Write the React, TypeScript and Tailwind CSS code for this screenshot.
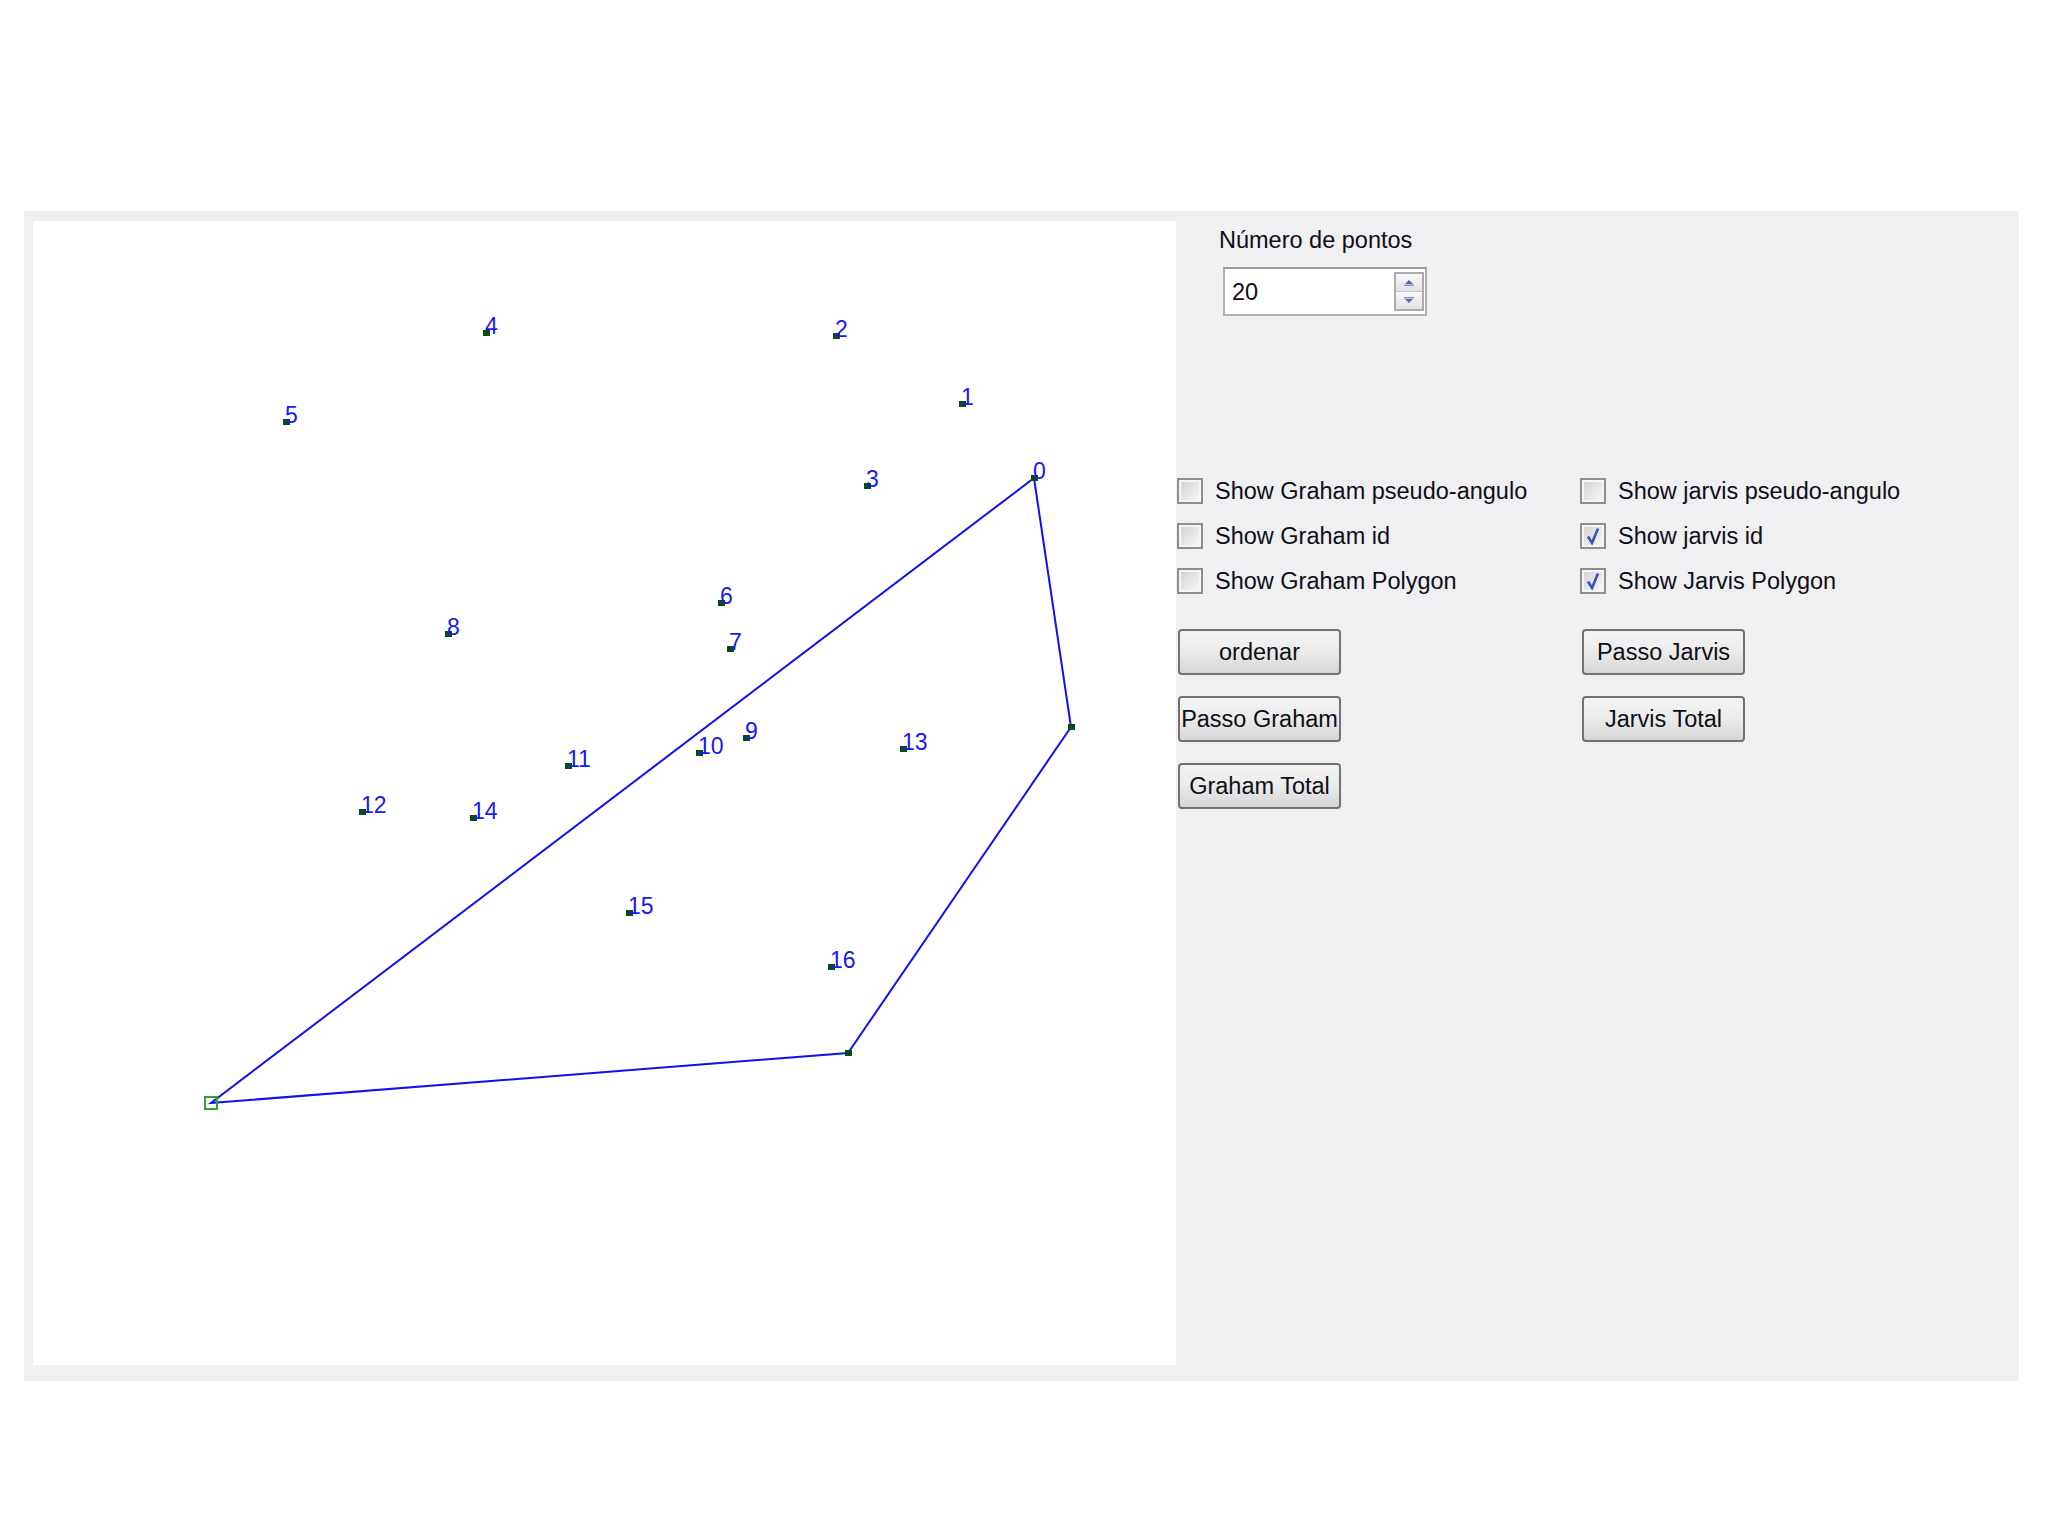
import React from 'react';

type Pt = { x: number; y: number; id?: number };

// page coordinates of the points (marker centre)
const points: Pt[] = [
    { x: 1034, y: 478, id: 0 },
    { x: 962, y: 404, id: 1 },
    { x: 836, y: 336, id: 2 },
    { x: 867, y: 486, id: 3 },
    { x: 486, y: 333, id: 4 },
    { x: 286, y: 422, id: 5 },
    { x: 721, y: 603, id: 6 },
    { x: 730, y: 649, id: 7 },
    { x: 448, y: 634, id: 8 },
    { x: 746, y: 738, id: 9 },
    { x: 699, y: 753, id: 10 },
    { x: 568, y: 766, id: 11 },
    { x: 362, y: 812, id: 12 },
    { x: 903, y: 749, id: 13 },
    { x: 473, y: 818, id: 14 },
    { x: 629, y: 913, id: 15 },
    { x: 831, y: 967, id: 16 },
    { x: 1071, y: 727 },
    { x: 848, y: 1053 },
];

const start = { x: 211, y: 1103 };

const hull = [points[0], points[17], points[18], start];

const Canvas: React.FC = () => {
    const d = hull.map((p, i) => `${i === 0 ? 'M' : 'L'}${p.x} ${p.y}`).join(' ') + ' Z';
    return (
        <svg width="1143" height="1144" viewBox="33 221 1143 1144" className="block">
            <path d={d} fill="none" stroke="#1010f0" strokeWidth={2} />
            {points.map((p, i) => (
                <g key={i}>
                    <rect x={p.x - 3} y={p.y - 3} width={7} height={6} fill="#0b4a12" />
                    {p.id !== undefined && (
                        <text
                            x={p.x - 1}
                            y={p.y + 1}
                            fontFamily="'Liberation Sans', Arial, sans-serif"
                            fontSize={23}
                            fill="#1818f0"
                        >
                            {p.id}
                        </text>
                    )}
                </g>
            ))}
            <rect x={205} y={1097} width={12} height={12} fill="none" stroke="#2ea32e" strokeWidth={2} />
        </svg>
    );
};

const CheckBox: React.FC<{ label: string; checked?: boolean }> = ({ label, checked }) => (
    <div className="flex h-[45px] items-center">
        <span className="flex h-[26px] w-[26px] border-2 border-[#8e8e8e]">
            <span className="flex flex-1 items-center justify-center border-2 border-[#f5f5f5] bg-linear-to-br from-[#d4d4d4] to-[#f6f6f6]">
                {checked && (
                    <svg width="16" height="18" viewBox="0 0 16 18">
                        <path d="M3 9.5 L7 16 L13 1.5" fill="none" stroke="#3556b4" strokeWidth={2.6} />
                    </svg>
                )}
            </span>
        </span>
        <span className="ml-[12px] text-[23.5px] leading-[28px] whitespace-nowrap text-[#0e0e18]">{label}</span>
    </div>
);

const Button: React.FC<{ label: string }> = ({ label }) => (
    <div className="flex h-[46px] w-[163px] items-center justify-center overflow-hidden rounded-[4px] border-2 border-[#727272] bg-linear-to-b from-[#f4f4f4] via-[#ebebeb] to-[#d6d6d6]">
        <span className="text-[23.5px] leading-[28px] whitespace-nowrap text-[#0e0e18]">{label}</span>
    </div>
);

const SpinBox: React.FC = () => (
    <div className="ml-[47px] mt-[13px] flex h-[49px] w-[204px] items-center border-2 border-[#b0b0b0] border-t-[#9c9c9c] bg-white">
        <span className="flex-1 pl-[7px] text-[23.5px] leading-[28px] text-[#0e0e18]">20</span>
        <div className="mr-[1px] flex h-[39px] w-[30px] flex-col border-2 border-[#ababab] bg-[#ececec]">
            <div className="flex flex-1 items-center justify-center border-b border-[#c4c4c4] bg-linear-to-b from-[#f8f8f8] to-[#e2e2e2]">
                <svg width="10" height="7" viewBox="0 0 10 7">
                    <path d="M1 5 L5 1 L9 5 Z" fill="#5468ac" />
                    <rect x="0" y="5.5" width="10" height="1.5" fill="#8b98c6" />
                </svg>
            </div>
            <div className="flex flex-1 items-center justify-center bg-linear-to-b from-[#f8f8f8] to-[#e2e2e2]">
                <svg width="10" height="7" viewBox="0 0 10 7">
                    <rect x="0" y="0" width="10" height="1.5" fill="#8b98c6" />
                    <path d="M1 2 L5 6 L9 2 Z" fill="#5468ac" />
                </svg>
            </div>
        </div>
    </div>
);

export default function App() {
    return (
        <div className="h-[1536px] w-[2048px] bg-white pl-[24px] pt-[211px] font-['Liberation_Sans',Arial,sans-serif]">
            <div className="flex h-[1170px] w-[1995px] items-start bg-[#f0eff1]">
                {/* drawing area */}
                <div className="ml-[9px] mt-[10px] h-[1144px] w-[1143px] bg-white">
                    <Canvas />
                </div>

                {/* controls */}
                <div className="flex flex-1 flex-col">
                    <div className="ml-[43px] mt-[15px] text-[23.5px] leading-[28px] text-[#0e0e18]">Número de pontos</div>
                    <SpinBox />

                    <div className="ml-[1px] mt-[152px] grid grid-cols-[403px_1fr]">
                        <CheckBox label="Show Graham pseudo-angulo" />
                        <CheckBox label="Show jarvis pseudo-angulo" />
                        <CheckBox label="Show Graham id" />
                        <CheckBox label="Show jarvis id" checked />
                        <CheckBox label="Show Graham Polygon" />
                        <CheckBox label="Show Jarvis Polygon" checked />
                    </div>

                    <div className="ml-[2px] mt-[26px] flex gap-[241px]">
                        <div className="flex flex-col gap-[21px]">
                            <Button label="ordenar" />
                            <Button label="Passo Graham" />
                            <Button label="Graham Total" />
                        </div>
                        <div className="flex flex-col gap-[21px]">
                            <Button label="Passo Jarvis" />
                            <Button label="Jarvis Total" />
                        </div>
                    </div>
                </div>
            </div>
        </div>
    );
}
